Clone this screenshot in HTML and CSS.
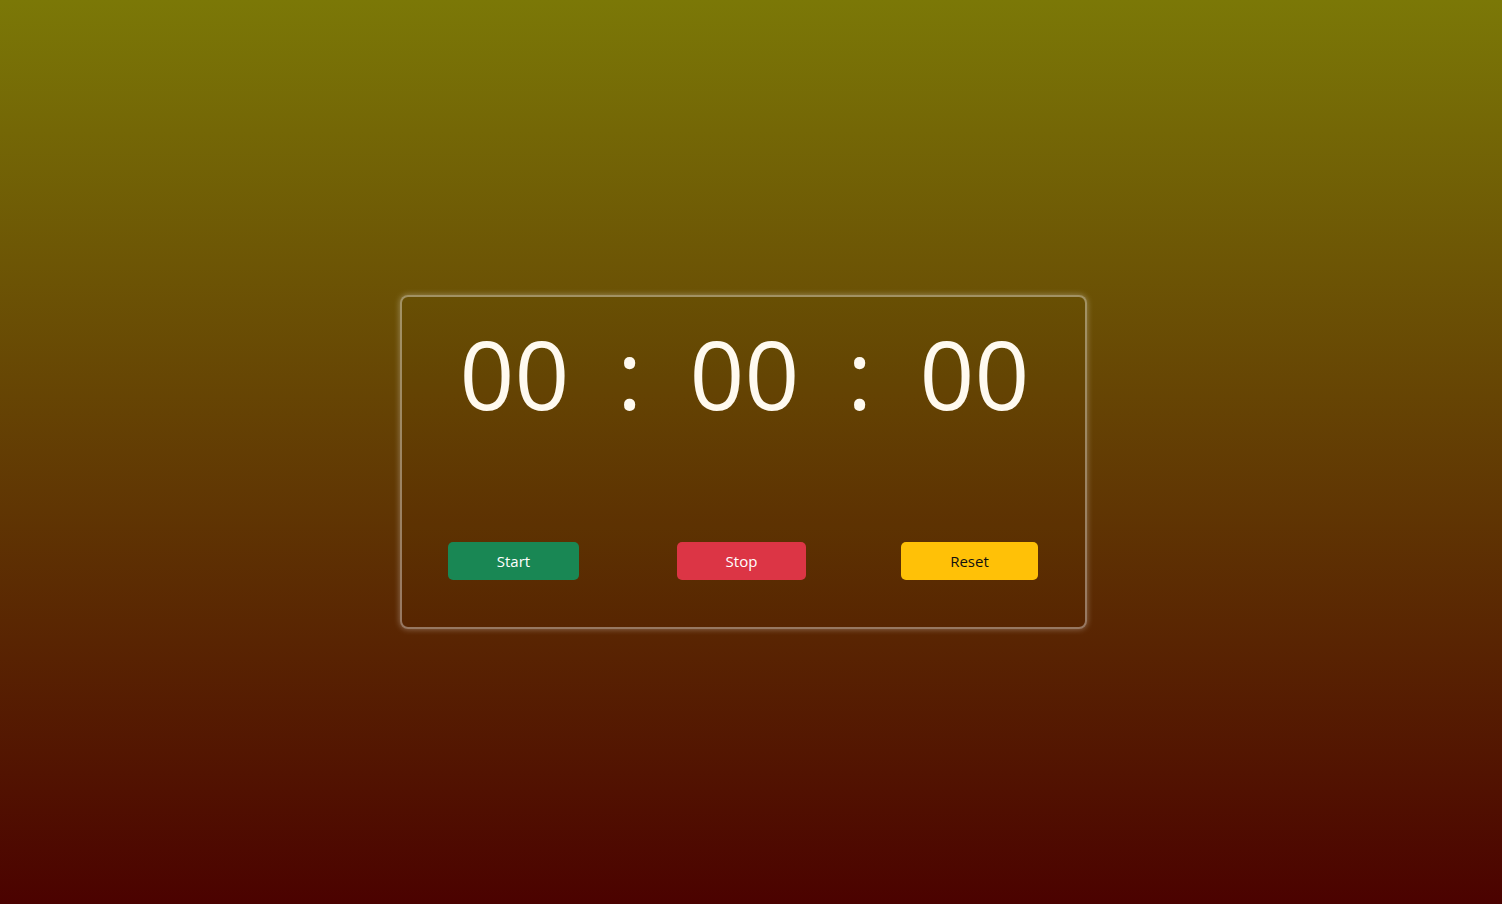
FILE: index.html
```html
<!DOCTYPE html>
<html lang="en">
<head>
<meta charset="utf-8">
<title>Stopwatch</title>
<link rel="stylesheet" href="styles.css">
</head>
<body>
<main class="page">
  <section class="card">
    <div class="display">
      <span class="unit">00</span>
      <span class="sep">:</span>
      <span class="unit">00</span>
      <span class="sep">:</span>
      <span class="unit">00</span>
    </div>
    <div class="controls">
      <button class="btn btn-start">Start</button>
      <button class="btn btn-stop">Stop</button>
      <button class="btn btn-reset">Reset</button>
    </div>
  </section>
</main>
</body>
</html>
```
FILE: styles.css
```css
html, body {
  margin: 0;
  padding: 0;
  height: 100%;
}
body {
  background: linear-gradient(to bottom, #7b7807 0%, #4b0200 100%);
  font-family: "Open Sans", "Noto Sans", sans-serif;
}
.page {
  height: 100%;
  box-sizing: border-box;
  display: flex;
  align-items: center;
  justify-content: center;
  padding-top: 20px;
  padding-right: 15px;
}
.card {
  width: 687px;
  height: 334px;
  box-sizing: border-box;
  border: 2px solid rgba(255, 255, 255, 0.38);
  border-radius: 8px;
  box-shadow: 0 0 6px rgba(255, 255, 255, 0.35);
  background: rgba(0, 0, 0, 0.02);
  display: flex;
  flex-direction: column;
  align-items: center;
  padding-top: 14px;
}
.display {
  display: grid;
  grid-template-columns: repeat(5, 115px);
  color: #fffaf0;
  font-size: 96px;
  line-height: 124px;
  height: 124px;
  margin-left: 2px;
}
.unit, .sep {
  text-align: center;
}
.sep {
  position: relative;
  top: 0;
}
.controls {
  margin-top: 107px;
  display: grid;
  grid-template-columns: repeat(3, 228px);
  justify-items: center;
  margin-left: -4px;
}
.btn {
  font-family: "Open Sans", "Noto Sans", sans-serif;
  font-size: 15px;
  height: 38px;
  border: none;
  border-radius: 5px;
  padding: 0 49px;
  cursor: pointer;
}
.btn-start {
  background: #198754;
  color: #fff;
}
.btn-stop {
  background: #dc3545;
  color: #fff;
}
.btn-reset {
  background: #ffc107;
  color: #111;
}
```
